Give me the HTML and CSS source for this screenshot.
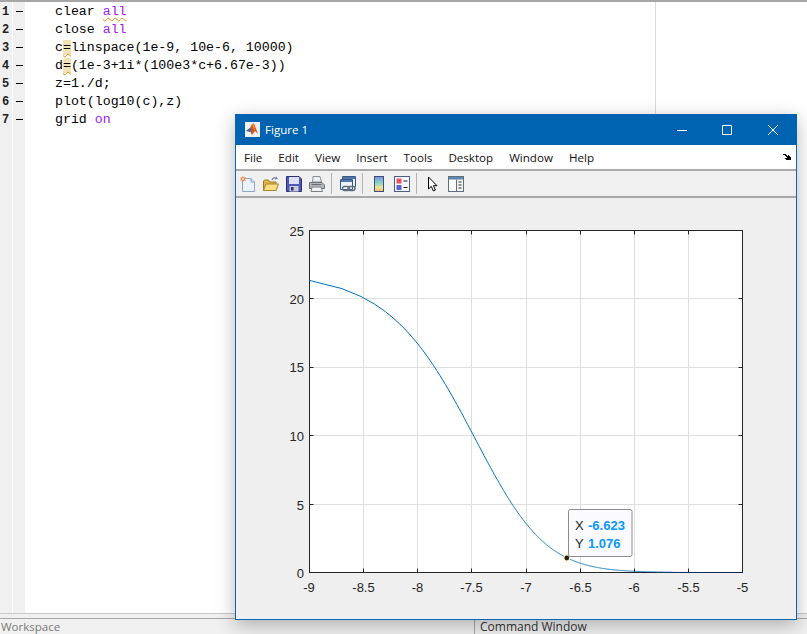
FILE: index.html
```html
<!DOCTYPE html>
<html lang="en">
<head>
<meta charset="utf-8">
<title>MATLAB</title>
<link rel="stylesheet" href="styles.css">
</head>
<body>
<main class="desktop">
  <section class="editor">
    <div class="nums"><div>1</div><div>2</div><div>3</div><div>4</div><div>5</div><div>6</div><div>7</div></div>
    <div class="marks"><i></i><i></i><i></i><i></i><i></i><i></i><i></i></div>
    <pre class="code"><code class="src">clear <span class="kw squig">all</span>
close <span class="kw">all</span>
c<span class="hl squig">=</span>linspace(1e-9, 10e-6, 10000)
d<span class="hl squig">=</span>(1e-3+1i*(100e3*c+6.67e-3))
z=1./d;
plot(log10(c),z)
grid <span class="kw">on</span></code></pre>
  </section>
  <div class="splitter"></div>
  <footer class="docks">
    <div class="dock dock-left">Workspace</div>
    <div class="dock dock-right">Command Window</div>
  </footer>

  <article class="figure">
    <header class="titlebar">
      <span class="app-icon">
        <svg viewBox="0 0 14 14" width="14" height="14">
          <path d="M1 9 L5 6 L7 2 L9 1.5 L13 12 L10 9 L7 13 L5 9Z" fill="#d9531e"/>
          <path d="M1 9 L5 6 L6.5 8 L5 10Z" fill="#2a6fb5"/>
          <path d="M7 2 L9 1.5 L10 9 L8 6Z" fill="#f08a2c"/>
        </svg>
      </span>
      <span class="title">Figure 1</span>
      <span class="winbtns">
        <svg viewBox="0 0 10 10" width="10" height="10"><path class="wb" d="M0 5.5H10"/></svg>
        <svg viewBox="0 0 10 10" width="10" height="10"><path class="wb" d="M.5.5H9.5V9.5H.5Z"/></svg>
        <svg viewBox="0 0 10 10" width="10" height="10"><path class="wb" d="M0 0L10 10M10 0L0 10"/></svg>
      </span>
    </header>
    <nav class="menubar">
      <span>File</span><span>Edit</span><span>View</span><span>Insert</span><span>Tools</span><span>Desktop</span><span>Window</span><span>Help</span>
      <svg class="dockarrow" viewBox="0 0 8 6" width="8" height="6"><path d="M0 0h3v1h1v1h1v-1h1v1h1v1h1v3h-5v-1h-1v-1h2v-1h-1v-1h-1v-1h-2z" fill="#000"/></svg>
    </nav>
    <div class="toolbar">
      <span class="tb"><svg viewBox="0 0 16 16" width="16" height="16">
        <path d="M2.5 2.5H11L14.5 6V15.5H2.5Z" fill="#eaf2fc" stroke="#8fa6c4"/><path d="M11 2.5V6H14.5" fill="#cfdcee" stroke="#8fa6c4"/>
        <path d="M3 0L4 1.7 6 1 4.8 3 6 5 4 4.3 3 6 2 4.3 0 5 1.2 3 0 1 2 1.7Z" fill="#ee7b45"/><circle cx="3" cy="3" r="1" fill="#ffe9a0"/>
      </svg></span>
      <span class="tb"><svg viewBox="0 0 16 16" width="16" height="16">
        <path d="M.5 5V14.5H13V6H7L5.5 4H1.5Z" fill="#e0b64a" stroke="#9c7a22"/><path d="M.5 14.5L3 8H15.5L13 14.5Z" fill="#fbdf82" stroke="#a8842c"/>
        <path d="M9 4C10 1.5 12 1.5 14 2.5" fill="none" stroke="#6f8398" stroke-width="1.2"/><path d="M13 .5L15 3 12 3.5Z" fill="#6f8398"/>
      </svg></span>
      <span class="tb"><svg viewBox="0 0 16 16" width="16" height="16">
        <path d="M.5 .5H13L15.5 3V15.5H.5Z" fill="#5157b5" stroke="#2c2f78"/><rect x="3" y="1" width="10" height="7" fill="#dcdff5"/>
        <rect x="3.5" y="10" width="9" height="5.5" fill="#c9cbd6"/><rect x="5" y="11" width="2.5" height="3.5" fill="#2c2f78"/>
      </svg></span>
      <span class="tb"><svg viewBox="0 0 16 16" width="16" height="16">
        <path d="M4 .5H11L12.5 6H3.5Z" fill="#eceff2" stroke="#8b8f94"/><path d="M.5 6.5H13L15.5 9V12.5H.5Z" fill="#b3b7bb" stroke="#6f7377"/>
        <path d="M3 11H12L13.5 15.5H2Z" fill="#f2f2f2" stroke="#7c7f83"/><rect x="2.5" y="8" width="10" height="1" fill="#6a6d70"/>
      </svg></span>
      <span class="tsep"></span>
      <span class="tb"><svg viewBox="0 0 16 16" width="16" height="16">
        <path d="M2.5 .5H15.5V10.5H2.5Z" fill="#e8eef6" stroke="#3a5a86"/><rect x="3" y="1" width="12" height="2" fill="#4f77ab"/>
        <path d="M.5 3.5H12.5V13.5H.5Z" fill="#eef2f8" stroke="#3a5a86"/><rect x="1" y="4" width="11" height="2" fill="#4f77ab"/>
        <rect x="2.5" y="10.5" width="7" height="4" rx="2" fill="none" stroke="#5f6f80" stroke-width="1.4"/><rect x="8" y="10.5" width="7" height="4" rx="2" fill="none" stroke="#5f6f80" stroke-width="1.4"/>
      </svg></span>
      <span class="tsep"></span>
      <span class="tb"><svg viewBox="0 0 16 16" width="16" height="16">
        <defs><linearGradient id="cb" x1="0" y1="0" x2="0" y2="1"><stop offset="0" stop-color="#7a8fe0"/><stop offset=".45" stop-color="#8fd6c4"/><stop offset=".75" stop-color="#f0e39a"/><stop offset="1" stop-color="#f0b070"/></linearGradient></defs>
        <rect x="3.5" y=".5" width="9" height="15" fill="url(#cb)" stroke="#3f4f7a"/>
      </svg></span>
      <span class="tb"><svg viewBox="0 0 16 16" width="16" height="16">
        <rect x=".5" y=".5" width="15" height="15" fill="#f4f6fa" stroke="#4b5f85"/><rect x="2.5" y="2.5" width="5" height="5" fill="#e4545a"/><rect x="2.5" y="9" width="5" height="5" fill="#5a62d8"/>
        <path d="M9.5 5H13.5M9.5 11.5H13.5" stroke="#222"/>
      </svg></span>
      <span class="tsep"></span>
      <span class="tb"><svg viewBox="0 0 16 16" width="16" height="16">
        <path d="M3.5 1V13L6.3 10.4 8.4 15 10.4 14 8.4 9.7H12Z" fill="#fff" stroke="#000" stroke-linejoin="round"/>
      </svg></span>
      <span class="tb"><svg viewBox="0 0 16 16" width="16" height="16">
        <rect x=".5" y=".5" width="15" height="15" fill="#f2f2f2" stroke="#5f6f80"/><rect x="1" y="1" width="14" height="2.5" fill="#5f87ad"/><rect x="1" y="4" width="7" height="11" fill="#fff"/>
        <path d="M8.5 3.5V15.5" stroke="#5f6f80"/><path d="M10.5 6H13.5M10.5 9H13.5M10.5 12H13.5" stroke="#333"/>
      </svg></span>
    </div>
    <div class="canvas">
      <svg class="plot" viewBox="236 198 560 421" width="560" height="421" role="img" aria-label="Line plot">
        <rect class="axes-bg" x="309.5" y="230.5" width="433" height="342"/>
        <path class="grid" d="M363.5 230.5V572.5M417.5 230.5V572.5M471.5 230.5V572.5M526.5 230.5V572.5M580.5 230.5V572.5M634.5 230.5V572.5M688.5 230.5V572.5M309.5 298.5H742.5M309.5 367.5H742.5M309.5 435.5H742.5M309.5 504.5H742.5"/>
        <rect class="axes-box" x="309.5" y="230.5" width="433" height="342"/>
        <path class="ticks" d="M363.5 230.5v4M417.5 230.5v4M471.5 230.5v4M526.5 230.5v4M580.5 230.5v4M634.5 230.5v4M688.5 230.5v4M363.5 572.5v-4M417.5 572.5v-4M471.5 572.5v-4M526.5 572.5v-4M580.5 572.5v-4M634.5 572.5v-4M688.5 572.5v-4M309.5 298.5h4M309.5 367.5h4M309.5 435.5h4M309.5 504.5h4M742.5 298.5h-4M742.5 367.5h-4M742.5 435.5h-4M742.5 504.5h-4"/>
        <polyline id="curve" class="curve" points=""/>
        <g class="ylab">
          <text x="304" y="236">25</text><text x="304" y="304">20</text><text x="304" y="372">15</text><text x="304" y="441">10</text><text x="304" y="510">5</text><text x="304" y="578">0</text>
        </g>
        <g class="xlab">
          <text x="309" y="592">-9</text><text x="363.5" y="592">-8.5</text><text x="417.5" y="592">-8</text><text x="471.5" y="592">-7.5</text><text x="526" y="592">-7</text><text x="580.5" y="592">-6.5</text><text x="634" y="592">-6</text><text x="688.5" y="592">-5.5</text><text x="742.5" y="592">-5</text>
        </g>
        <circle class="halo" cx="566.8" cy="558" r="3.4"/>
        <circle class="dot" cx="566.8" cy="558" r="2.4"/>
        <rect class="tip" x="568.5" y="509.5" width="63.5" height="47" rx="2"/>
        <text class="tiptext" x="575" y="530">X <tspan class="tipval" x="588">-6.623</tspan></text>
        <text class="tiptext" x="575" y="548">Y <tspan class="tipval" x="588">1.076</tspan></text>
      </svg>
    </div>
  </article>
</main>
<script src="script.js"></script>
</body>
</html>
```
FILE: styles.css
```css
* { box-sizing: border-box; }
html, body { margin: 0; height: 100%; }
body { overflow: hidden; background: #f0f0f0; font-family: "Open Sans", "Liberation Sans", sans-serif; }
.desktop { position: relative; width: 807px; height: 634px; overflow: hidden; display: flex; flex-direction: column; }

.editor { display: flex; height: 614px; flex: none; background: #fff; border-top: 2px solid #a6a6a6; border-bottom: 1px solid #c8c8c8; }
.nums, .marks { background: #f0f0f0; width: 12px; flex: none; }
.nums { font: bold 12px/18px "Liberation Mono", monospace; color: #222; padding: 1px 0 0 2px; }
.nums div { height: 18px; }
.marks { margin-left: 1px; }
.marks i { display: block; height: 18px; }
.marks i::after { content: ""; display: block; width: 7px; height: 1px; background: #000; transform: translateY(9px); margin-left: 3px; }
.code { flex: 1; margin: 0; padding: 1px 0 0 30px; font: 13.25px/18px "Liberation Mono", monospace; color: #000;
  background: linear-gradient(#d9d9d9, #d9d9d9) no-repeat 630px 0 / 1px 100%; }
.src { font: inherit; }
.kw { color: #a020f0; }
.hl { background: #efe2b4; }
.squig { text-decoration: underline wavy #f08a00 1px; text-underline-offset: 2px; }

.splitter { height: 5px; flex: none; background: #f0f0f0; border-bottom: 1px solid #a8a8a8; }
.docks { display: flex; flex: 1; min-height: 0; font-size: 12px; line-height: 13px; }
.dock { white-space: nowrap; padding-top: 1px; }
.dock-left { width: 474px; color: #7a7a7a; padding-left: 1px; font-size: 11.5px; }
.dock-right { flex: 1; color: #333; padding-left: 5px; border-left: 1px solid #a8a8a8; }

.figure { position: absolute; left: 235px; top: 114px; width: 562px; height: 506px; background: #f0f0f0; border: 1px solid #0a66b4; border-top: 0; display: flex; flex-direction: column; box-shadow: 0 5px 18px rgba(0,0,0,.28); }
.titlebar { height: 31px; flex: none; background: #0063b1; color: #fff; display: flex; align-items: center; padding-left: 9px; margin: 0 -1px 0 0; font-size: 11.6px; }
.app-icon { width: 15px; height: 15px; background: #eef1f5; display: flex; }
.title { margin-left: 5px; }
.winbtns { margin-left: auto; display: flex; gap: 35px; padding-right: 19px; }
.winbtns svg { display: block; }
.winbtns svg:last-child { margin-left: 1px; }
.wb { fill: none; stroke: #fff; stroke-width: 1; }
.menubar { height: 26px; flex: none; background: #fff; border-bottom: 2px solid #a9a9a9; display: flex; align-items: center; gap: 16px; padding-left: 8px; padding-right: 5px; font-size: 11.6px; color: #111; }
.dockarrow { margin-left: auto; }
.toolbar { height: 27px; flex: none; background: #f0f0f0; border-bottom: 2px solid #a9a9a9; display: flex; align-items: center; }
.tb { width: 23px; height: 16px; display: flex; justify-content: center; flex: none; }
.tsep { width: 1px; height: 21px; background: #b4b4b4; margin: 0 4px 0 3px; flex: none; }
.canvas { flex: 1; background: #efefef; min-height: 0; }
.plot { display: block; }

.axes-bg { fill: #fff; }
.grid { fill: none; stroke: #dfdfdf; stroke-width: 1; }
.axes-box { fill: none; stroke: #262626; stroke-width: 1; }
.ticks { fill: none; stroke: #262626; stroke-width: 1; }
.curve { fill: none; stroke: #0072bd; stroke-width: 1; }
.ylab text, .xlab text, .tiptext { font: 13px "Liberation Sans", Arial, sans-serif; fill: #262626; }
.ylab text { text-anchor: end; }
.xlab text { text-anchor: middle; }
.halo { fill: #fff6b0; }
.dot { fill: #222; }
.tip { fill: #fbfbff; stroke: #8c8c8c; stroke-width: 1; }
.tipval { font-weight: bold; fill: #0a96ff; }
```
FILE: script.js
```js
// z = 1 ./ d, d = 1e-3 + 1i*(100e3*c + 6.67e-3), c = linspace(1e-9, 10e-6, 10000)
(function () {
  var n = 10000, a = 1e-9, b = 10e-6, pts = [];
  for (var k = 0; k < n; k++) {
    var c = a + (b - a) * k / (n - 1);
    var lx = Math.log10(c);
    if (lx > -5) break;
    var im = 100e3 * c + 6.67e-3;
    var z = 1e-3 / (1e-6 + im * im);
    pts.push((309.5 + (lx + 9) * 108.25).toFixed(2) + "," + (572.5 - z * 13.68).toFixed(2));
  }
  document.getElementById("curve").setAttribute("points", pts.join(" "));
})();
```
